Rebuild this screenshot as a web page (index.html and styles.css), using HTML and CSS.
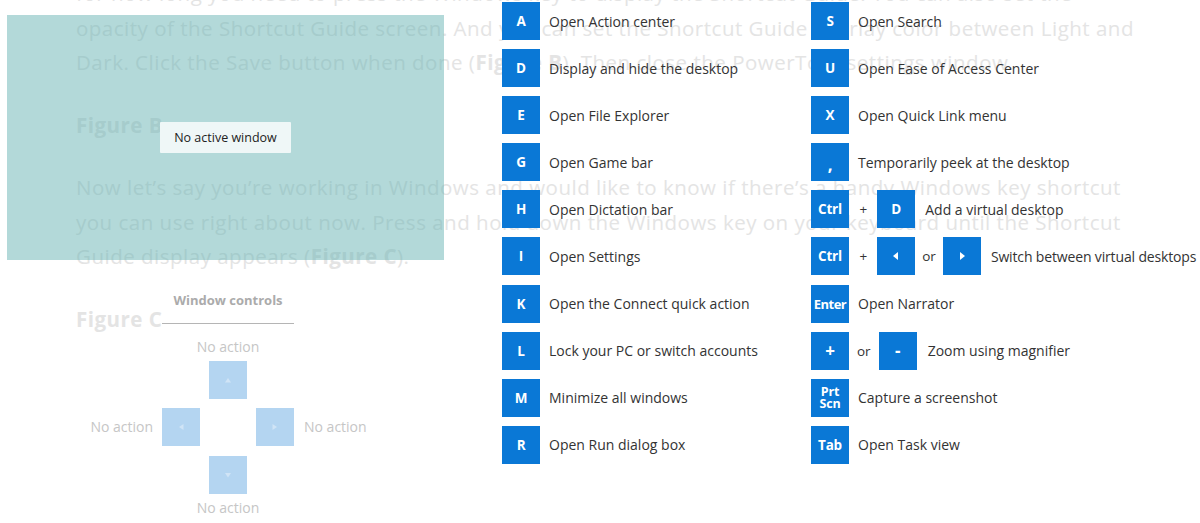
FILE: index.html
```html
<!DOCTYPE html>
<html lang="en">
<head>
<meta charset="utf-8">
<title>Shortcut Guide</title>
<link rel="stylesheet" href="styles.css">
</head>
<body>
<div class="screen">
  <article class="article">
    <p>for how long you need to press the Windows key to display the Shortcut Guide. You can also set the<br>opacity of the Shortcut Guide screen. And you can set the Shortcut Guide overlay color between Light and<br>Dark. Click the Save button when done (<b>Figure B</b>). Then close the PowerToys settings window.</p>
    <p class="fig">Figure B</p>
    <p>Now let’s say you’re working in Windows and would like to know if there’s a handy Windows key shortcut<br>you can use right about now. Press and hold down the Windows key on your keyboard until the Shortcut<br>Guide display appears (<b>Figure C</b>).</p>
    <p class="fig">Figure C</p>
  </article>

  <div class="teal"><div class="tip">No active window</div></div>

  <div class="wc">
    <div class="wc-title">Window controls</div>
    <div class="wc-na wc-top">No action</div>
    <div class="wc-box wc-up"><svg viewBox="0 0 38 38" width="38" height="38"><polygon points="16,21.5 22,21.5 19,17" /></svg></div>
    <div class="wc-na wc-left">No action</div>
    <div class="wc-box wc-l"><svg viewBox="0 0 38 38" width="38" height="38"><polygon points="21.5,16 21.5,22 17,19" /></svg></div>
    <div class="wc-box wc-r"><svg viewBox="0 0 38 38" width="38" height="38"><polygon points="16.5,16 16.5,22 21,19" /></svg></div>
    <div class="wc-na wc-right">No action</div>
    <div class="wc-box wc-down"><svg viewBox="0 0 38 38" width="38" height="38"><polygon points="16,17 22,17 19,21.5" /></svg></div>
    <div class="wc-na wc-bottom">No action</div>
  </div>

  <div class="guide">
    <div class="col">
      <div class="row"><span class="key">A</span><span class="label">Open Action center</span></div>
      <div class="row"><span class="key">D</span><span class="label">Display and hide the desktop</span></div>
      <div class="row"><span class="key">E</span><span class="label">Open File Explorer</span></div>
      <div class="row"><span class="key">G</span><span class="label">Open Game bar</span></div>
      <div class="row"><span class="key">H</span><span class="label">Open Dictation bar</span></div>
      <div class="row"><span class="key">I</span><span class="label">Open Settings</span></div>
      <div class="row"><span class="key">K</span><span class="label">Open the Connect quick action</span></div>
      <div class="row"><span class="key">L</span><span class="label">Lock your PC or switch accounts</span></div>
      <div class="row"><span class="key">M</span><span class="label">Minimize all windows</span></div>
      <div class="row"><span class="key">R</span><span class="label">Open Run dialog box</span></div>
    </div>
    <div class="col">
      <div class="row"><span class="key">S</span><span class="label">Open Search</span></div>
      <div class="row"><span class="key">U</span><span class="label">Open Ease of Access Center</span></div>
      <div class="row"><span class="key">X</span><span class="label">Open Quick Link menu</span></div>
      <div class="row"><span class="key key-comma">,</span><span class="label">Temporarily peek at the desktop</span></div>
      <div class="row"><span class="key">Ctrl</span><span class="op op-plus">+</span><span class="key">D</span><span class="label label-10">Add a virtual desktop</span></div>
      <div class="row"><span class="key">Ctrl</span><span class="op op-plus">+</span><span class="key"><svg viewBox="0 0 10 10" width="10" height="10"><polygon points="7,1 7,9 2,5" /></svg></span><span class="op op-or">or</span><span class="key"><svg viewBox="0 0 10 10" width="10" height="10"><polygon points="3,1 3,9 8,5" /></svg></span><span class="label label-10 label-tight">Switch between virtual desktops</span></div>
      <div class="row"><span class="key key-wide">Enter</span><span class="label">Open Narrator</span></div>
      <div class="row"><span class="key key-big">+</span><span class="op op-or2">or</span><span class="key key-big">-</span><span class="label label-11">Zoom using magnifier</span></div>
      <div class="row"><span class="key key-two">Prt<br>Scn</span><span class="label">Capture a screenshot</span></div>
      <div class="row"><span class="key">Tab</span><span class="label">Open Task view</span></div>
    </div>
  </div>
</div>
</body>
</html>
```

FILE: styles.css
```css
html, body {
  margin: 0;
  padding: 0;
  background: #ffffff;
}

.screen {
  position: relative;
  width: 1200px;
  height: 523px;
  overflow: hidden;
  background: #ffffff;
}

/* faint article text behind the overlay */
.article {
  margin: -24px 0 0 0;
  padding-left: 76px;
  font-family: "Open Sans", sans-serif;
  font-size: 20.5px;
  letter-spacing: 0.5px;
  line-height: 34.5px;
  color: #e4e4e4;
  white-space: nowrap;
}

.article p {
  margin: 0 0 28px 0;
}

.article b,
.article .fig {
  font-weight: 700;
}

/* teal overlay with tooltip */
.teal {
  position: absolute;
  left: 7px;
  top: 15px;
  width: 437px;
  height: 245px;
  background: rgba(103, 179, 179, 0.5);
  display: flex;
  align-items: center;
  justify-content: center;
}

.tip {
  background: #eff7f7;
  color: #222;
  font-family: "Open Sans", sans-serif;
  font-size: 12.5px;
  width: 131px;
  height: 31px;
  display: flex;
  align-items: center;
  justify-content: center;
  border-radius: 1px;
}

/* window controls widget */
.wc {
  position: absolute;
  left: 93px;
  top: 288px;
  display: grid;
  grid-template-columns: 60px 38px 38px 38px auto;
  grid-template-rows: 36px 37px 47px 48px 38px auto;
  column-gap: 9px;
  row-gap: 0;
  font-family: "Open Sans", sans-serif;
}

.wc-title {
  grid-column: 2 / 5;
  grid-row: 1;
  text-align: center;
  font-size: 13px;
  font-weight: 700;
  color: #ababab;
  line-height: 24px;
  border-bottom: 1.5px solid #b5b5b5;
  height: 36px;
  box-sizing: border-box;
}

.wc-na {
  font-size: 14px;
  color: #c6c6c6;
  line-height: 20px;
  white-space: nowrap;
}

.wc-top {
  grid-column: 2 / 5;
  grid-row: 2;
  text-align: center;
  align-self: end;
  margin-bottom: 4px;
}

.wc-bottom {
  grid-column: 2 / 5;
  grid-row: 6;
  text-align: center;
  margin-top: 4px;
}

.wc-left {
  grid-column: 1;
  grid-row: 4;
  align-self: start;
  justify-self: end;
  line-height: 38px;
}

.wc-right {
  grid-column: 5;
  grid-row: 4;
  align-self: start;
  line-height: 38px;
  margin-left: 1px;
}

.wc-box {
  width: 38px;
  height: 38px;
  background: #b4d5f1;
  align-self: start;
}

.wc-box svg {
  display: block;
  fill: #d0e4f6;
}

.wc-up { grid-column: 3; grid-row: 3; }
.wc-l { grid-column: 2; grid-row: 4; }
.wc-r { grid-column: 4; grid-row: 4; }
.wc-down { grid-column: 3; grid-row: 5; }

/* shortcut guide */
.guide {
  position: absolute;
  left: 502px;
  top: 2px;
  display: grid;
  grid-template-columns: 309px auto;
  font-family: "Open Sans", sans-serif;
}

.col {
  display: flex;
  flex-direction: column;
  gap: 9.1px;
}

.row {
  display: flex;
  align-items: center;
  height: 38px;
}

.key {
  flex: none;
  width: 38px;
  height: 38px;
  background: #0a78d6;
  color: #ffffff;
  font-weight: 700;
  font-size: 13.5px;
  display: flex;
  align-items: center;
  justify-content: center;
  letter-spacing: -0.2px;
}

.key svg {
  display: block;
  fill: #ffffff;
}

.key-wide {
  font-size: 13px;
  letter-spacing: -0.5px;
}

.key-big {
  font-size: 17px;
}

.key-comma {
  font-size: 17px;
  padding-top: 4px;
  box-sizing: border-box;
}

.key-two {
  font-size: 12.5px;
  line-height: 12px;
  text-align: center;
}

.label {
  margin-left: 9px;
  font-size: 14px;
  color: #333333;
  white-space: nowrap;
}

.label-10 { margin-left: 10px; }
.label-11 { margin-left: 11px; }
.label-tight { letter-spacing: -0.15px; }

.op {
  font-size: 13.5px;
  color: #333333;
}

.op-plus { margin: 0 10px 0 10.5px; }
.op-or { margin: 0 7px 0 7px; }
.op-or2 { margin: 0 8px 0 8px; }
```
